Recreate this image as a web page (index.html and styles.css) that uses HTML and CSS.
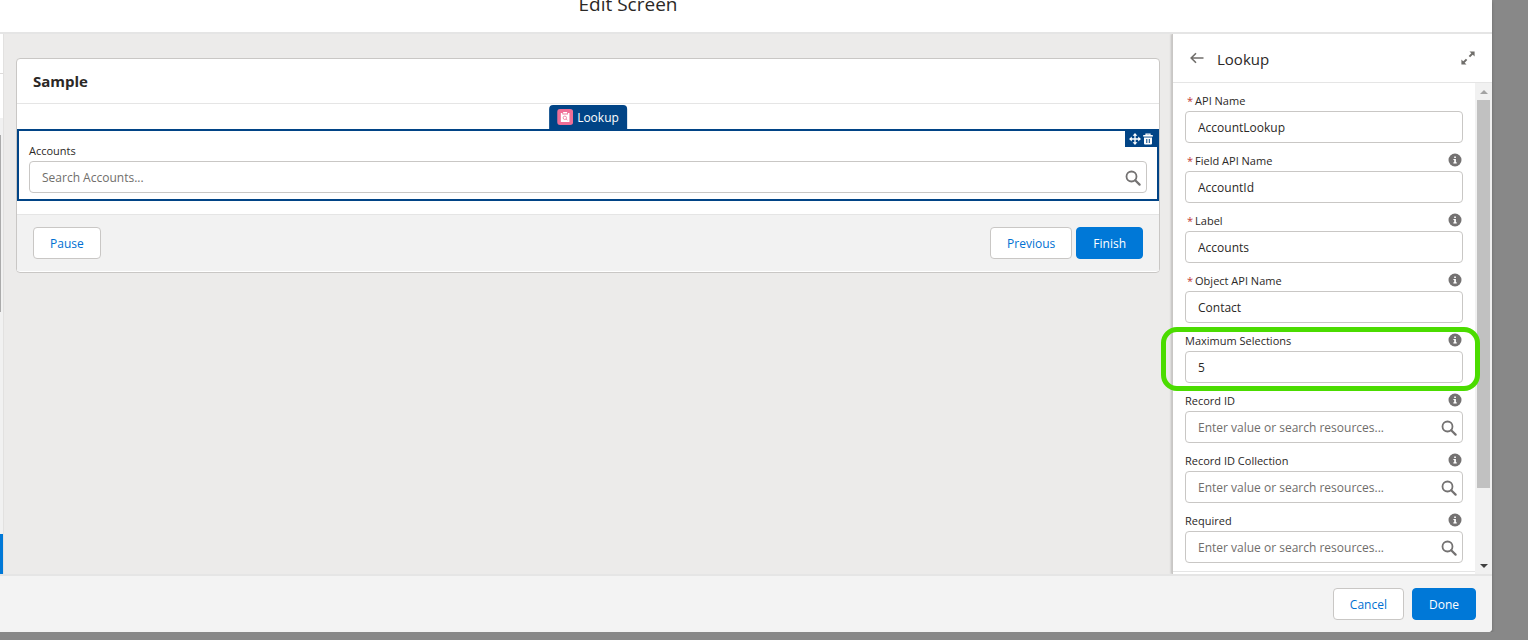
FILE: index.html
```html
<!DOCTYPE html>
<html lang="en">
<head>
  <meta charset="UTF-8" />
  <meta name="viewport" content="width=device-width, initial-scale=1.0"/>
  <title>Edit Screen</title>
  <link rel="stylesheet" href="styles.css">
</head>
<body>

<!-- Shared icons -->
<svg class="sprite" aria-hidden="true">
  <symbol id="icon-search" viewBox="0 0 16 16">
    <circle cx="6.5" cy="6.5" r="5" fill="none" stroke="currentColor" stroke-width="1.8"/>
    <path d="M10.2 10.2L14.6 14.6" stroke="currentColor" stroke-width="2.2" stroke-linecap="round"/>
  </symbol>
  <symbol id="icon-info" viewBox="0 0 14 14">
    <circle cx="7" cy="7" r="6.5" fill="currentColor"/>
    <path d="M6.2 3.4h1.7v1.5H6.2zM5.4 5.9h2.5v3.4h.8v1.1H5.4V9.3h.8V7h-.8z" fill="#fff"/>
  </symbol>
</svg>

<div class="modal">
  <header class="modal-header">
    <h1>Edit Screen</h1>
  </header>

  <div class="modal-body">
    <div class="toolbox">
      <div class="toolbox-head"></div>
      <div class="toolbox-tabs"></div>
      <div class="toolbox-list"><div class="toolbox-thumb"></div></div>
      <div class="toolbox-active"></div>
    </div>

    <main class="canvas">
      <section class="card">
        <h2>Sample</h2>

        <div class="card-body">
          <div class="component">
            <div class="component-tab">
              <svg class="component-icon" viewBox="0 0 16 16">
                <rect width="16" height="16" rx="3" fill="#ef6e96"/>
                <path d="M3.7 4h1.5v1.4h5.6V4h1.5v9H3.7z" fill="#fff"/>
                <path d="M6 3h4v1.6H6z" fill="#fff"/>
                <circle cx="7.7" cy="8.8" r="1.7" fill="none" stroke="#ef6e96" stroke-width=".8"/>
                <path d="M9 10l1.4 1.4" stroke="#ef6e96" stroke-width=".8"/>
              </svg>
              <span>Lookup</span>
            </div>
            <div class="component-actions">
              <button type="button" aria-label="Move">
                <svg viewBox="0 0 12 12" width="12" height="12">
                  <path d="M6 1v10M1 6h10" stroke="#fff" stroke-width="1.3"/>
                  <path d="M6 0l2.4 2.8H3.6zM6 12l2.4-2.8H3.6zM0 6l2.8-2.4v4.8zM12 6L9.2 3.6v4.8z" fill="#fff"/>
                </svg>
              </button>
              <button type="button" aria-label="Delete">
                <svg viewBox="0 0 12 12" width="12" height="12">
                  <path d="M4 2V1.2h4V2" fill="none" stroke="#fff" stroke-width="1.2"/>
                  <path d="M1.2 2h9.6v1.6H1.2z" fill="#fff"/>
                  <path fill-rule="evenodd" d="M2 4.5h8v6q0 1-1 1H3q-1 0-1-1zM4.3 6v4h1V6zM6.8 6v4h1V6z" fill="#fff"/>
                </svg>
              </button>
            </div>
            <label for="accounts">Accounts</label>
            <div class="input-wrap">
              <input type="text" id="accounts" placeholder="Search Accounts...">
              <svg class="search"><use href="#icon-search"/></svg>
            </div>
          </div>
        </div>

        <div class="card-footer">
          <button type="button" class="btn">Pause</button>
          <div class="nav-buttons">
            <button type="button" class="btn">Previous</button>
            <button type="button" class="btn btn-brand">Finish</button>
          </div>
        </div>
      </section>
    </main>

    <aside class="panel">
      <div class="panel-header">
        <button type="button" class="icon-btn" aria-label="Back">
          <svg viewBox="0 0 14 12" width="14" height="12">
            <path d="M6 1.2L1.2 6 6 10.8M1.5 6h12" fill="none" stroke="currentColor" stroke-width="1.6"/>
          </svg>
        </button>
        <h2>Lookup</h2>
        <button type="button" class="icon-btn expand" aria-label="Expand">
          <svg viewBox="0 0 14 14" width="14" height="14">
            <path d="M8.4 5.6L12 2M5.6 8.4L2 12" stroke="currentColor" stroke-width="2"/>
            <path d="M8.5.4h5.1v5.1zM.4 8.5v5.1h5.1z" fill="currentColor"/>
          </svg>
        </button>
      </div>

      <div class="panel-body">
        <form class="fields">
          <div class="field">
            <label for="apiName"><span class="req">*</span>API Name</label>
            <input type="text" id="apiName" value="AccountLookup">
          </div>

          <div class="field">
            <label for="fieldApiName"><span class="req">*</span>Field API Name</label>
            <svg class="info"><use href="#icon-info"/></svg>
            <input type="text" id="fieldApiName" value="AccountId">
          </div>

          <div class="field">
            <label for="label"><span class="req">*</span>Label</label>
            <svg class="info"><use href="#icon-info"/></svg>
            <input type="text" id="label" value="Accounts">
          </div>

          <div class="field">
            <label for="objectApiName"><span class="req">*</span>Object API Name</label>
            <svg class="info"><use href="#icon-info"/></svg>
            <input type="text" id="objectApiName" value="Contact">
          </div>

          <div class="field highlighted">
            <label for="maxSelections">Maximum Selections</label>
            <svg class="info"><use href="#icon-info"/></svg>
            <input type="text" id="maxSelections" value="5">
          </div>

          <div class="field">
            <label for="recordId">Record ID</label>
            <svg class="info"><use href="#icon-info"/></svg>
            <div class="input-wrap">
              <input type="text" id="recordId" placeholder="Enter value or search resources...">
              <svg class="search"><use href="#icon-search"/></svg>
            </div>
          </div>

          <div class="field">
            <label for="recordIdCollection">Record ID Collection</label>
            <svg class="info"><use href="#icon-info"/></svg>
            <div class="input-wrap">
              <input type="text" id="recordIdCollection" placeholder="Enter value or search resources...">
              <svg class="search"><use href="#icon-search"/></svg>
            </div>
          </div>

          <div class="field">
            <label for="required">Required</label>
            <svg class="info"><use href="#icon-info"/></svg>
            <div class="input-wrap">
              <input type="text" id="required" placeholder="Enter value or search resources...">
              <svg class="search"><use href="#icon-search"/></svg>
            </div>
          </div>
        </form>

        <div class="scrollbar">
          <div class="arrow arrow-up"></div>
          <div class="track"><div class="thumb"></div></div>
          <div class="arrow arrow-down"></div>
        </div>
      </div>
    </aside>
  </div>

  <footer class="modal-footer">
    <button type="button" class="btn">Cancel</button>
    <button type="button" class="btn btn-brand">Done</button>
  </footer>
</div>

</body>
</html>
```
FILE: styles.css
```css
* {
  box-sizing: border-box;
}

body {
  margin: 0;
  font-family: 'Open Sans', 'Noto Sans', sans-serif;
  font-size: 12px;
  color: #2b2826;
  background: #888;
}

h1, h2 {
  margin: 0;
}

button, input {
  font-family: inherit;
  font-size: 12px;
}

.sprite {
  display: none;
}

.modal {
  display: flex;
  flex-direction: column;
  min-height: calc(100vh - 8px);
  margin-right: 36px;
  background: #fff;
  border-radius: 0 0 4px 0;
  box-shadow: 0 2px 3px rgba(0, 0, 0, 0.25);
}

/* the title is scrolled partly out of view */
.modal-header {
  padding: 0 236px 16px 0;
  border-bottom: 2px solid #e5e5e5;
  text-align: center;
}

.modal-header h1 {
  margin-top: -8px;
  font-size: 19px;
  font-weight: 400;
  line-height: 24px;
}

.modal-body {
  display: flex;
  flex: 1;
}

.modal-footer {
  display: flex;
  justify-content: flex-end;
  gap: 8px;
  padding: 12px 16px;
  background: #f3f3f3;
  border-top: 2px solid #e5e5e5;
  border-radius: 0 0 4px 0;
}

/* Left toolbox edge */
.toolbox {
  display: flex;
  flex-direction: column;
  width: 4px;
  border-right: 1px solid #e2e1e0;
}

.toolbox-head {
  height: 40px;
  border-bottom: 1px solid #dddbda;
}

.toolbox-tabs {
  height: 44px;
}

.toolbox-list {
  flex: 1;
  padding-top: 17px;
  background: #f1f1f1;
}

.toolbox-thumb {
  width: 1px;
  height: 177px;
  background: #aaa;
}

.toolbox-active {
  height: 40px;
  background: #0078d7;
}

/* Canvas */
.canvas {
  flex: 1;
  padding: 24px 12px;
  background: #ecebea;
}

.card {
  padding-bottom: 1px;
  background: #fff;
  border: 1px solid #c9c7c5;
  border-radius: 4px;
}

.card h2 {
  padding: 0 16px;
  border-bottom: 1px solid #e5e5e5;
  font-size: 15px;
  font-weight: 700;
  line-height: 44px;
}

.card-body {
  padding: 25px 0 13px;
}

.component {
  position: relative;
  padding: 10px 10px 6px;
  border: 2px solid #014486;
}

.component label,
.field label {
  font-size: 11px;
  line-height: 20px;
}

.component label {
  display: block;
}

.component-tab {
  position: absolute;
  bottom: 100%;
  left: 50%;
  transform: translateX(-50%);
  display: flex;
  align-items: center;
  gap: 4px;
  height: 26px;
  padding: 0 8px 2px;
  color: #fff;
  background: #014486;
  border-radius: 4px 4px 0 0;
}

.component-icon {
  width: 16px;
  height: 16px;
}

.component-actions {
  position: absolute;
  top: 0;
  right: 0;
  display: flex;
  gap: 1px;
  height: 16px;
  padding: 2px 3px 2px 4px;
  background: #014486;
}

.component-actions button,
.icon-btn {
  display: flex;
  padding: 0;
  border: none;
  color: #706e6b;
  background: none;
  cursor: pointer;
}

.card-footer {
  display: flex;
  justify-content: space-between;
  padding: 12px 16px;
  background: #f2f2f2;
  border-top: 1px solid #e5e5e5;
}

.nav-buttons {
  display: flex;
  gap: 4px;
}

.btn {
  height: 32px;
  padding: 0 16px;
  color: #0070d2;
  background: #fff;
  border: 1px solid #c9c7c5;
  border-radius: 4px;
  cursor: pointer;
}

.btn-brand {
  color: #fff;
  background: #0078d7;
  border-color: #0078d7;
}

/* Inputs */
input {
  display: block;
  width: 100%;
  height: 32px;
  padding: 0 12px;
  color: #2b2826;
  background: #fff;
  border: 1px solid #c9c7c5;
  border-radius: 4px;
}

input::placeholder {
  color: #706e6b;
  opacity: 1;
}

.input-wrap {
  position: relative;
}

.search {
  position: absolute;
  top: 9px;
  right: 6px;
  width: 16px;
  height: 16px;
  color: #747272;
}

/* Properties panel */
.panel {
  display: flex;
  flex-direction: column;
  width: 320px;
  border-left: 1px solid #c9c7c5;
  box-shadow: -1px 0 2px rgba(0, 0, 0, 0.2);
  clip-path: inset(0 0 0 -20px);
}

.panel-header {
  display: flex;
  align-items: center;
  gap: 13px;
  height: 49px;
  padding: 0 17px;
  border-bottom: 1px solid #e5e5e5;
}

.panel-header h2 {
  padding-top: 2px;
  font-size: 15px;
  font-weight: 400;
}

.expand {
  margin-left: auto;
}

.panel-body {
  display: flex;
  flex: 1;
}

.fields {
  flex: 1;
  align-self: flex-start;
  padding: 8px 12px 0;
  border-bottom: 1px solid #e5e5e5;
}

.field {
  position: relative;
  display: grid;
  grid-template-columns: 1fr auto;
  align-items: center;
  margin-bottom: 8px;
}

.field > input,
.field > .input-wrap {
  grid-column: 1 / -1;
}

.req {
  margin: 0 2px;
  color: #c23934;
}

.info {
  width: 14px;
  height: 14px;
  margin: 0 1px 2px 0;
  color: #747272;
}

.highlighted::after {
  content: "";
  position: absolute;
  z-index: 1;
  top: -4px;
  right: -17px;
  bottom: -8px;
  left: -24px;
  border: 5px solid #4bdc00;
  border-radius: 16px;
  pointer-events: none;
}

/* Scrollbar */
.scrollbar {
  display: flex;
  flex-direction: column;
  width: 17px;
  background: #f1f1f1;
}

.track {
  flex: 1;
  padding: 0 2px;
}

.thumb {
  height: 85%;
  background: #c1c1c1;
}

.arrow {
  display: flex;
  align-items: center;
  justify-content: center;
  height: 17px;
}

.arrow::before {
  content: "";
  border: 4px solid transparent;
}

.arrow-up::before {
  border-top: none;
  border-bottom-color: #a3a3a3;
}

.arrow-down::before {
  border-bottom: none;
  border-top-color: #404040;
}
```
